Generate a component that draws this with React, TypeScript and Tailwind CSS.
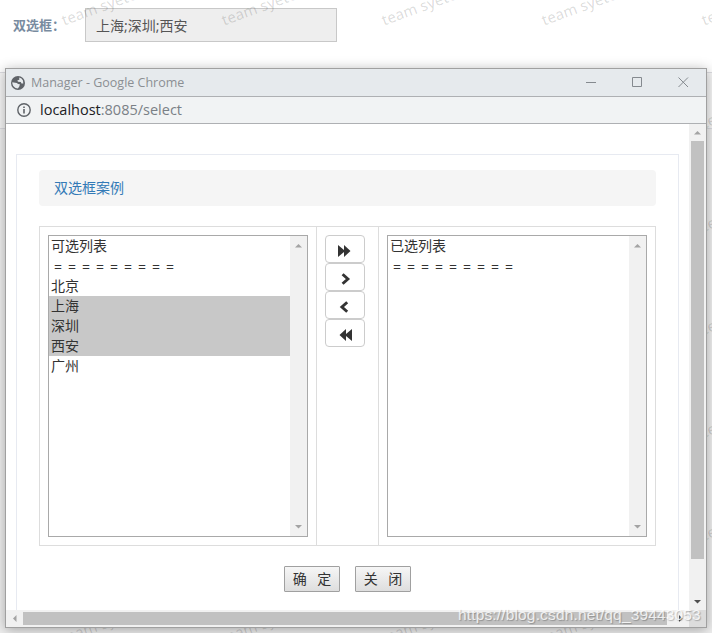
import React from 'react';
import clsx from 'clsx';

const leftOptions = [
  { text: '可选列表' },
  { text: '=========', divider: true },
  { text: '北京' },
  { text: '上海', selected: true },
  { text: '深圳', selected: true },
  { text: '西安', selected: true },
  { text: '广州' },
];

const rightOptions = [{ text: '已选列表' }, { text: '=========', divider: true }];

// page watermark, repeated every 160 x 103
const marks = [
  [0, 0], [0, 1], [0, 2], [0, 3], [0, 4],
  [1, 4], [2, 4], [3, 4], [4, 4], [5, 4],
  [6, 0], [6, 1], [6, 2], [6, 3],
];

export default function App() {
  return (
    <div className="relative h-[633px] w-[712px] overflow-hidden bg-white font-['Noto_Sans','Noto_Sans_CJK_SC',sans-serif] text-[#333]">
      <div className="flex h-[72px] items-start pt-2">
        <label className="w-[85px] pt-[7px] pl-[13px] text-[13px] leading-5 font-bold text-[#788ba0]">双选框：</label>
        <div className="h-[34px] w-[252px] border border-[#c8c8c8] bg-[#eee] pl-[10px] text-sm leading-[33px] text-[#555]">上海;深圳;西安</div>
      </div>
      <div className="h-[57px] border-t border-b border-[#dddde2] bg-[#f7f7f7]" />
      <div className="h-[504px] bg-[#f0f0f0]" />

      {marks.map(([row, col]) => (
        <span
          key={`${row}-${col}`}
          className="absolute origin-left -rotate-[20deg] text-[15px] leading-5 tracking-[0.1px] whitespace-nowrap text-black/15"
          style={{ left: 62 + col * 160, top: 10 + row * 103 }}
        >
          team syeter
        </span>
      ))}

      <div className="absolute top-[68px] left-[5px] flex h-[560px] w-[702px] flex-col border border-[#a0a0a0] bg-white shadow-[0_2px_12px_rgba(0,0,0,0.32)]">
        <TitleBar />
        <div className="flex h-[27px] shrink-0 items-center border-b border-[#aeb0b3] bg-[#f1f3f4] pl-[11px]">
          <InfoIcon />
          <span className="ml-[9px] font-['Open_Sans'] text-[14.5px] text-[#7a8086]">
            <span className="text-[#202124]">localhost</span>:8085/select
          </span>
        </div>
        <div className="flex h-[486px]">
          <div className="flex-1 overflow-hidden pt-[30px] pl-[10px]">
            <Panel />
          </div>
          <div className="flex w-[17px] flex-col items-center bg-[#f1f1f1]">
            <Arrow dir="up" className="h-[17px] text-[#a3a3a3]" />
            <div className="h-[418px] w-[13px] bg-[#c1c1c1]" />
            <Arrow dir="down" className="mt-auto h-[17px] text-[#505050]" />
          </div>
        </div>
        <div className="flex h-[17px] items-center bg-[#f1f1f1]">
          <Arrow dir="left" className="w-[17px] text-[#a3a3a3]" />
          <div className="h-[13px] w-[644px] bg-[#c1c1c1]" />
          <Arrow dir="right" className="ml-auto w-[17px] text-[#505050]" />
          <div className="h-[17px] w-[17px] bg-[#dcdcdc]" />
        </div>
      </div>

      <span className="absolute top-[605px] left-[458px] font-['Liberation_Sans'] text-[15.5px] leading-5 tracking-[0.15px] whitespace-nowrap text-white/80 [text-shadow:1px_1px_1px_rgba(0,0,0,0.25)]">
        https://blog.csdn.net/qq_39443053
      </span>
    </div>
  );
}

function TitleBar() {
  return (
    <div className="flex h-7 shrink-0 items-center border-b border-[#aeb0b3] bg-[#e6eaed] pl-[5px]">
      <svg className="h-[14px] w-[14px]" viewBox="0 0 14 14">
        <circle cx="7" cy="7" r="7" fill="#5f6368" />
        <path d="M1.3 6.2 5.8 6.9 7.1 8.1 8.9 8.3 8.3 10.6 6.9 12.4C3.5 12.3 1.2 9.5 1.3 6.2ZM8.2 1.5 10.5 2.5 12 4.500 12.3 7.6 10.5 7.5 9.8 5.9 7 5.8 6.3 4.6 8.3 3.7Z" fill="#e6eaed" />
      </svg>
      <span className="ml-[6px] pt-px font-['Open_Sans'] text-[12.5px] text-[#8b8f93]">Manager - Google Chrome</span>
      <svg className="mr-[17px] ml-auto h-[11px] w-[103px]" viewBox="0 0 103 11" fill="none" stroke="#858a8f">
        <path d="M0 5.5h10M46.5.5h9v9h-9zM92.5.5l9.5 9.5M102 .5l-9.5 9.5" />
      </svg>
    </div>
  );
}

function InfoIcon() {
  return (
    <svg className="h-[14px] w-[14px]" viewBox="0 0 14 14" fill="none" stroke="#5f6368">
      <circle cx="7" cy="7" r="6.2" strokeWidth="1.4" />
      <path d="M7 6v4.5M7 3.5v1.5" strokeWidth="1.6" />
    </svg>
  );
}

function Panel() {
  return (
    <div className="h-[500px] w-[663px] border border-[#e7eaf1] px-[22px] pt-[15px]">
      <div className="h-9 rounded bg-[#f5f5f5] pl-[15px] text-sm leading-9 text-[#337ab7]">双选框案例</div>
      <div className="mt-5 flex h-80 border border-[#ddd]">
        <div className="w-[276px] p-2">
          <ListBox options={leftOptions} />
        </div>
        <div className="w-[63px] border-r border-l border-[#ddd] py-2 pl-2">
          <MoveButton d="M0 0 6 5V0l6.5 6L6 12V7L0 12Z" />
          <MoveButton d="M4.6 1.2 9.900 6 4.600 10.800" line />
          <MoveButton d="M9.200 1.200 3.900 6 9.200 10.800" line />
          <MoveButton d="M14 0 8 5V0L1.500 6 8 12V7L14 12Z" />
        </div>
        <div className="flex-1 p-2">
          <ListBox options={rightOptions} />
        </div>
      </div>
      <div className="mt-5 flex justify-start gap-[15px] pl-[245px]">
        <ActionButton>确&ensp; 定</ActionButton>
        <ActionButton>关&ensp; 闭</ActionButton>
      </div>
    </div>
  );
}

type Option = { text: string; selected?: boolean; divider?: boolean };

function ListBox({ options }: { options: Option[] }) {
  return (
    <div className="flex h-[302px] w-[260px] border border-[#a9a9a9] bg-white">
      <div className="flex-1 overflow-hidden">
        {options.map((o) => (
          <div
            key={o.text}
            className={clsx(
              'h-5 text-sm leading-[19px] whitespace-nowrap',
              o.divider ? 'pt-px pl-[5px] tracking-[5.99px]' : 'pl-[2px]',
              o.selected && 'bg-[#c8c8c8]'
            )}
          >
            {o.text}
          </div>
        ))}
      </div>
      <div className="flex w-[17px] flex-col items-center justify-between bg-[#f1f1f1]">
        <Arrow dir="up" className="h-[19px] text-[#a3a3a3]" />
        <Arrow dir="down" className="h-[19px] text-[#a3a3a3]" />
      </div>
    </div>
  );
}

function MoveButton({ d, line }: { d: string; line?: boolean }) {
  return (
    <button className="flex h-7 w-10 items-center justify-center rounded border border-[#ccc] bg-white pt-[3px]">
      <svg className="h-3 w-[14px] text-[#333]" viewBox="0 0 14 12">
        <path d={d} fill={line ? 'none' : 'currentColor'} stroke={line ? 'currentColor' : 'none'} strokeWidth="2.9" />
      </svg>
    </button>
  );
}

function ActionButton({ children }: { children: React.ReactNode }) {
  return (
    <button className="h-[26px] w-14 rounded-[1px] border border-[#a0a0a0] bg-linear-to-b from-[#f6f6f6] to-[#dedede] text-sm leading-6 whitespace-nowrap">
      {children}
    </button>
  );
}

const arrows = {
  up: 'M0 5.5 3.5 2 7 5.5Z',
  down: 'M0 2 3.5 5.5 7 2Z',
  left: 'M5.5 0 2 3.5 5.5 7Z',
  right: 'M2 0 5.5 3.5 2 7Z',
};

function Arrow({ dir, className }: { dir: keyof typeof arrows; className?: string }) {
  return (
    <span className={clsx('flex items-center justify-center', className)}>
      <svg className="h-[7px] w-[7px]" viewBox="0 0 7 7" fill="currentColor">
        <path d={arrows[dir]} />
      </svg>
    </span>
  );
}
